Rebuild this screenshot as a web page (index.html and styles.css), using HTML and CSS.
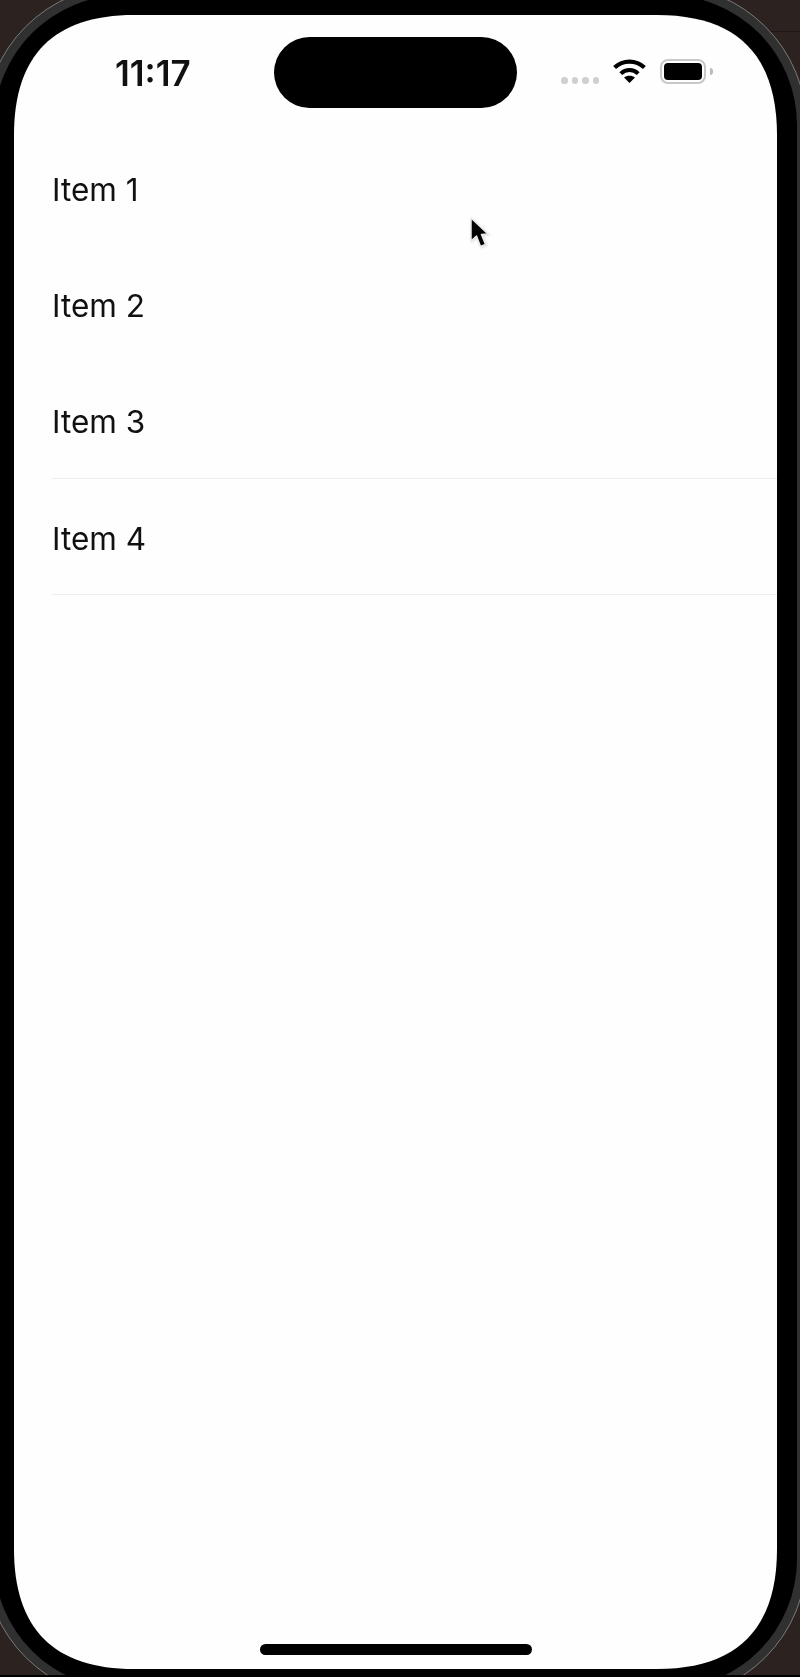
FILE: index.html
```html
<!DOCTYPE html>
<html lang="en">
<head>
    <meta charset="UTF-8">
    <meta name="viewport" content="width=device-width, initial-scale=1.0">
    <title>Item List</title>
    <link rel="stylesheet" href="styles.css">
</head>
<body>
    <div class="device">
        <div class="bezel">
            <div class="screen">
                <div class="status-bar">
                    <span class="time">11:17</span>
                    <div class="island"></div>
                    <div class="status-icons">
                        <div class="signal">
                            <span></span><span></span><span></span><span></span>
                        </div>
                        <svg class="wifi" viewBox="0 0 33 24" width="33" height="24">
                            <path d="M1.6 8.6C5.6 4.8 10.8 2.6 16.500 2.600C22.200 2.600 27.400 4.800 31.400 8.600" fill="none" stroke="#000" stroke-width="4.200"/>
                            <path d="M7.800 14.600C10.200 12.300 13.200 11 16.500 11C19.800 11 22.800 12.300 25.200 14.600" fill="none" stroke="#000" stroke-width="4"/>
                            <path d="M11 18.600C12.500 17.400 14.400 16.800 16.500 16.800C18.600 16.800 20.500 17.400 22 18.600L16.500 24Z" fill="#000"/>
                        </svg>
                        <div class="battery">
                            <div class="battery-body"><div class="battery-level"></div></div>
                            <div class="battery-cap"></div>
                        </div>
                    </div>
                </div>

                <ul class="list">
                    <li class="list-item">Item 1</li>
                    <li class="list-item">Item 2</li>
                    <li class="list-item divided">Item 3</li>
                    <li class="list-item divided">Item 4</li>
                </ul>

                <div class="home-indicator"></div>
            </div>
        </div>
    </div>

    <!-- Black edge along the bottom of the capture -->
    <div class="bottom-edge"></div>

    <!-- Mouse pointer over the simulator -->
    <svg class="cursor" viewBox="0 0 22 34" width="22" height="34">
        <path d="M3 2L3 25L8.500 20L12.500 30.500L17.500 28.500L13.500 18.500L20 18Z" fill="#000" stroke="#e8e8e8" stroke-width="1.500" stroke-linejoin="round"/>
    </svg>
</body>
</html>
```

FILE: styles.css
```css
/* General Styling */
html, body {
    margin: 0;
    padding: 0;
}

body {
    width: 800px;
    height: 1677px;
    overflow: hidden;
    position: relative;
    background-color: #2c2220;
    background-image: linear-gradient(#1f1816, #1f1816);
    background-size: 60px 1px;
    background-position: right 0 top 31px;
    background-repeat: no-repeat;
    font-family: 'Inter', 'Liberation Sans', sans-serif;
}

/* Simulator frame */
.device {
    width: 803px;
    height: 1694px;
    margin: -15px 0 0 -16px;
    padding: 9px;
    border: 1px solid #7a7a7a;
    border-radius: 141px;
    background-color: #303030;
}

.bezel {
    height: 1694px;
    padding: 20px;
    border-radius: 130px;
    background-color: #000;
    box-sizing: border-box;
}

/* Screen corners are continuous curves, so clip instead of border-radius */
.screen {
    height: 1654px;
    background-color: #fefefe;
    display: flex;
    flex-direction: column;
    clip-path: path("M0 120C0 40 40 0 120 0L643 0C723 0 763 40 763 120L763 1534C763 1614 723 1654 643 1654L120 1654C40 1654 0 1614 0 1534Z");
}

/* Status bar */
.status-bar {
    height: 114px;
    display: flex;
    align-items: flex-start;
    flex-shrink: 0;
}

.time {
    width: 103px;
    margin: 38px 0 0 101px;
    font-size: 35px;
    line-height: 40px;
    font-weight: 600;
    color: #111;
    filter: blur(0.4px);
}

.island {
    width: 243px;
    height: 71px;
    margin: 22px 0 0 56px;
    border-radius: 36px;
    background-color: #000;
}

.status-icons {
    display: flex;
    align-items: flex-start;
    margin: 44px 0 0 44px;
    filter: blur(0.5px);
}

.signal {
    display: flex;
    gap: 4px;
    margin: 18px 14px 0 0;
}

.signal span {
    width: 6.500px;
    height: 7px;
    border-radius: 50%;
    background-color: #cfcfcf;
}

.battery {
    display: flex;
    align-items: center;
    margin-left: 14px;
}

.battery-body {
    width: 46px;
    height: 25px;
    padding: 2px;
    border: 2px solid #c8c8c8;
    border-radius: 8px;
    box-sizing: border-box;
}

.battery-level {
    width: 100%;
    height: 100%;
    border-radius: 4px;
    background-color: #000;
}

.battery-cap {
    width: 3px;
    height: 7px;
    margin-left: 4px;
    border-radius: 0 3px 3px 0;
    background-color: #bbb;
}

/* List */
.list {
    list-style: none;
    margin: 0;
    padding: 0;
    flex: 1;
}

.list-item {
    height: 116.500px;
    margin-left: 38px;
    padding-top: 4px;
    display: flex;
    align-items: center;
    font-size: 31.500px;
    color: #111;
    box-sizing: border-box;
    filter: blur(0.4px);
}

.list-item.divided {
    border-bottom: 1px solid #eee;
}

.home-indicator {
    width: 272px;
    height: 11px;
    margin: 0 auto 14px;
    border-radius: 6px;
    background-color: #000;
    flex-shrink: 0;
}

.bottom-edge {
    position: absolute;
    left: 0;
    right: 0;
    bottom: 0;
    height: 2px;
    background-color: #000;
}

.cursor {
    position: absolute;
    left: 468px;
    top: 216px;
    filter: drop-shadow(1px 1px 1px rgba(0, 0, 0, 0.12));
}
```
